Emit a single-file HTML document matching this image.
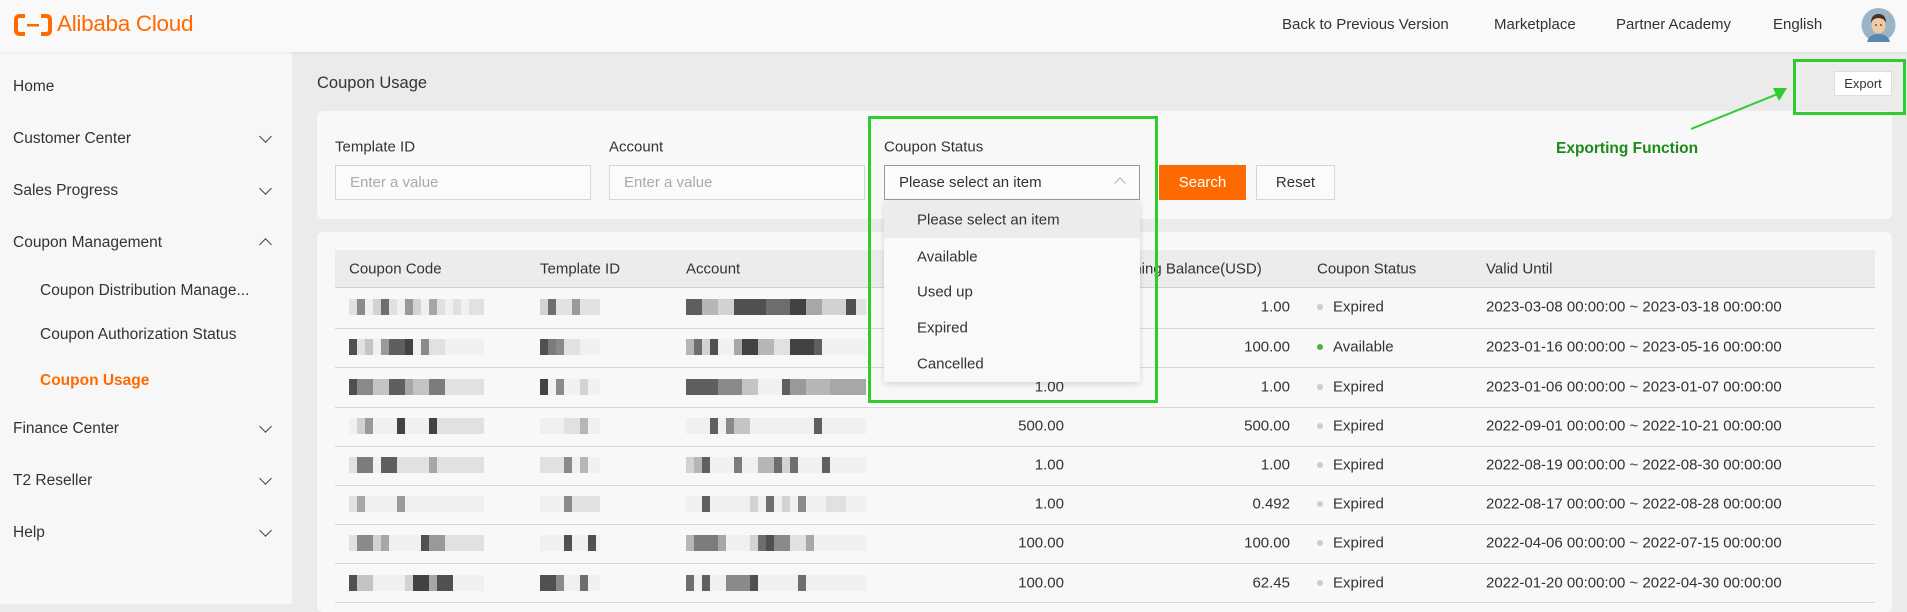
<!DOCTYPE html>
<html><head><meta charset="utf-8"><style>
*{margin:0;padding:0;box-sizing:border-box}
body{width:1907px;height:604px;overflow:hidden;background:#ebebeb;font-family:"Liberation Sans",Arial,sans-serif;color:#333;position:relative}
.a{position:absolute;white-space:nowrap}
#hdr{left:0;top:0;width:1907px;height:52px;background:#f9f9f9;box-shadow:0 1px 3px rgba(0,0,0,.06);z-index:2}
#side{left:0;top:52px;width:292px;height:552px;background:#f7f7f7}
.nav{font-size:15px;color:#333;top:0}
.sm{font-size:15.5px;color:#333;transform:translateY(-50%)}
.chev{width:9px;height:9px;border-right:1.4px solid #444;border-bottom:1.4px solid #444;transform:rotate(45deg)}
.card{background:#f8f8f8;border-radius:6px}
.lbl{font-size:15px;color:#333;transform:translateY(-50%)}
.inp{background:#fbfbfb;border:1px solid #d6d6d6;height:35px;font-size:15px;color:#aaa;padding:0 14px;line-height:33px}
.th{font-size:15px;color:#333;transform:translateY(-50%)}
.td{font-size:15px;color:#333;transform:translateY(-50%)}
.r{text-align:right}
.ln{height:1px;background:#d8d8d8;left:335px;width:1540px}
.dot{width:6px;height:6px;border-radius:50%;background:#ccc}
.px{height:16px;transform:translateY(-50%);opacity:.85}
.dd{font-size:15px;color:#333;transform:translateY(-50%)}
</style></head><body>
<div id="hdr" class="a">
 <svg class="a" style="left:14px;top:14px" width="38" height="22" viewBox="0 0 38 22"><path d="M11 2H6Q2 2 2 6V16Q2 20 6 20H11" fill="none" stroke="#ff6a00" stroke-width="4"/><path d="M27 2H32Q36 2 36 6V16Q36 20 32 20H27" fill="none" stroke="#ff6a00" stroke-width="4"/><rect x="13" y="10" width="12" height="2.5" fill="#ff6a00"/></svg>
 <div class="a" style="left:57px;top:11px;font-size:22.5px;color:#ff6a00;letter-spacing:-0.3px">Alibaba Cloud</div>
 <div class="a nav" style="left:1282px;top:16px">Back to Previous Version</div>
 <div class="a nav" style="left:1494px;top:16px">Marketplace</div>
 <div class="a nav" style="left:1616px;top:16px">Partner Academy</div>
 <div class="a nav" style="left:1773px;top:16px">English</div>
 <svg class="a" style="left:1861px;top:7px" width="35" height="36" viewBox="0 0 35 36"><circle cx="17.5" cy="18" r="17" fill="#9bb5c6"/><path d="M6 35Q8 27 17.5 27Q27 27 29 35Z" fill="#5a87b0"/><ellipse cx="17.5" cy="18" rx="7" ry="8.5" fill="#f2c9a5"/><path d="M10 16Q10 7 17.5 7Q25 7 25 16Q23 11 17.5 11Q12 11 10 16Z" fill="#4a3328"/><circle cx="15" cy="18" r=".9" fill="#333"/><circle cx="20" cy="18" r=".9" fill="#333"/></svg>
</div>
<div id="side" class="a">
 <div class="a sm" style="left:13px;top:35px">Home</div>
 <div class="a sm" style="left:13px;top:87px">Customer Center</div><div class="a chev" style="left:261px;top:80px"></div>
 <div class="a sm" style="left:13px;top:139px">Sales Progress</div><div class="a chev" style="left:261px;top:132px"></div>
 <div class="a sm" style="left:13px;top:191px">Coupon Management</div><div class="a chev" style="left:261px;top:188px;transform:rotate(225deg)"></div>
 <div class="a sm" style="left:40px;top:239px">Coupon Distribution Manage...</div>
 <div class="a sm" style="left:40px;top:283px">Coupon Authorization Status</div>
 <div class="a sm" style="left:40px;top:329px;color:#ff6a00;font-weight:bold">Coupon Usage</div>
 <div class="a sm" style="left:13px;top:377px">Finance Center</div><div class="a chev" style="left:261px;top:370px"></div>
 <div class="a sm" style="left:13px;top:429px">T2 Reseller</div><div class="a chev" style="left:261px;top:422px"></div>
 <div class="a sm" style="left:13px;top:481px">Help</div><div class="a chev" style="left:261px;top:474px"></div>
</div>
<div class="a" style="left:317px;top:74px;font-size:16.5px;color:#333">Coupon Usage</div>

<div class="a card" style="left:317px;top:111px;width:1575px;height:108px"></div>
<div class="a lbl" style="left:335px;top:147px">Template ID</div>
<div class="a lbl" style="left:609px;top:147px">Account</div>
<div class="a lbl" style="left:884px;top:147px">Coupon Status</div>
<div class="a inp" style="left:335px;top:165px;width:256px">Enter a value</div>
<div class="a inp" style="left:609px;top:165px;width:256px">Enter a value</div>
<div class="a inp" style="left:884px;top:165px;width:256px;color:#333;border-color:#999">Please select an item</div>
<div class="a chev" style="left:1116px;top:179px;width:8px;height:8px;border-color:#aaa;transform:rotate(225deg)"></div>
<div class="a" style="left:1159px;top:165px;width:87px;height:35px;background:#ff6a00;color:#fff;font-size:15px;text-align:center;line-height:35px">Search</div>
<div class="a" style="left:1256px;top:165px;width:79px;height:35px;background:#fbfbfb;border:1px solid #d6d6d6;font-size:15px;text-align:center;line-height:33px">Reset</div>

<div class="a" style="left:1834px;top:71px;width:58px;height:25px;background:#fff;border:1px solid #ddd;font-size:13px;line-height:23px;text-align:center;color:#333;z-index:5">Export</div>
<div class="a" style="left:1793px;top:59px;width:113px;height:56px;border:3.5px solid #2ecc2e;z-index:5"></div>
<svg class="a" style="left:1685px;top:82px;z-index:5" width="110" height="52"><line x1="6" y1="47" x2="95" y2="11" stroke="#2ecc2e" stroke-width="2"/><polygon points="102,6 88,6 94,19" fill="#2ecc2e"/></svg>
<div class="a" style="left:1556px;top:140px;font-size:15.5px;font-weight:bold;color:#1a8a1a;z-index:5">Exporting Function</div>

<div class="a card" style="left:317px;top:232px;width:1575px;height:380px"></div>
<div class="a" style="left:335px;top:250px;width:1540px;height:38px;background:#ececec;border-bottom:1px solid #d0d0d0"></div>
<div class="a th" style="left:349px;top:269px">Coupon Code</div>
<div class="a th" style="left:540px;top:269px">Template ID</div>
<div class="a th" style="left:686px;top:269px">Account</div>
<div class="a th" style="left:1090px;top:269px">Remaining Balance(USD)</div>
<div class="a th" style="left:1317px;top:269px">Coupon Status</div>
<div class="a th" style="left:1486px;top:269px">Valid Until</div>

<div class="a ln" style="top:328px"></div><div class="a ln" style="top:367px"></div><div class="a ln" style="top:407px"></div><div class="a ln" style="top:446px"></div><div class="a ln" style="top:485px"></div><div class="a ln" style="top:524px"></div><div class="a ln" style="top:563px"></div><div class="a ln" style="top:602px"></div>

<div class="a px" style="left:349px;top:307px;width:135px;background:linear-gradient(90deg,#ddd 0 8px,#777 8px 16px,#eee 16px 24px,#ccc 24px 32px,#555 32px 40px,#ddd 40px 48px,#eee 48px 56px,#888 56px 64px,#ccc 64px 72px,#eee 72px 80px,#999 80px 88px,#ddd 88px 96px,#eee 96px 104px,#ddd 104px 112px,#eee 112px 120px,#ddd 120px 135px)"></div>
<div class="a px" style="left:540px;top:307px;width:60px;background:linear-gradient(90deg,#ccc 0 8px,#555 8px 16px,#ddd 16px 32px,#888 32px 40px,#ddd 40px 60px)"></div>
<div class="a px" style="left:686px;top:307px;width:180px;background:linear-gradient(90deg,#444 0 16px,#aaa 16px 32px,#ccc 32px 48px,#333 48px 80px,#555 80px 104px,#222 104px 120px,#999 120px 136px,#ccc 136px 160px,#333 160px 170px,#ddd 170px 180px)"></div>
<div class="a px" style="left:349px;top:347px;width:135px;background:linear-gradient(90deg,#333 0 8px,#ddd 8px 16px,#bbb 16px 24px,#eee 24px 32px,#888 32px 40px,#444 40px 56px,#222 56px 64px,#eee 64px 72px,#777 72px 80px,#ddd 80px 96px,#eee 96px 135px)"></div>
<div class="a px" style="left:540px;top:347px;width:60px;background:linear-gradient(90deg,#333 0 8px,#666 8px 16px,#777 16px 24px,#ddd 24px 40px,#eee 40px 60px)"></div>
<div class="a px" style="left:686px;top:347px;width:180px;background:linear-gradient(90deg,#aaa 0 8px,#555 8px 16px,#ccc 16px 24px,#333 24px 32px,#eee 32px 48px,#999 48px 56px,#222 56px 72px,#aaa 72px 88px,#ddd 88px 104px,#222 104px 128px,#444 128px 136px,#eee 136px 180px)"></div>
<div class="a px" style="left:349px;top:387px;width:135px;background:linear-gradient(90deg,#333 0 8px,#777 8px 24px,#bbb 24px 40px,#444 40px 56px,#999 56px 64px,#bbb 64px 80px,#666 80px 96px,#ddd 96px 135px)"></div>
<div class="a px" style="left:540px;top:387px;width:60px;background:linear-gradient(90deg,#222 0 8px,#eee 8px 16px,#777 16px 24px,#eee 24px 40px,#ccc 40px 48px,#eee 48px 60px)"></div>
<div class="a px" style="left:686px;top:387px;width:180px;background:linear-gradient(90deg,#444 0 32px,#777 32px 56px,#bbb 56px 72px,#eee 72px 96px,#444 96px 104px,#888 104px 120px,#aaa 120px 144px,#999 144px 180px)"></div>
<div class="a px" style="left:349px;top:426px;width:135px;background:linear-gradient(90deg,#eee 0 8px,#ccc 8px 16px,#888 16px 24px,#eee 24px 48px,#222 48px 56px,#eee 56px 80px,#222 80px 88px,#ddd 88px 135px)"></div>
<div class="a px" style="left:540px;top:426px;width:60px;background:linear-gradient(90deg,#eee 0 24px,#ddd 24px 40px,#aaa 40px 48px,#eee 48px 60px)"></div>
<div class="a px" style="left:686px;top:426px;width:180px;background:linear-gradient(90deg,#eee 0 24px,#444 24px 32px,#eee 32px 40px,#777 40px 48px,#bbb 48px 64px,#eee 64px 128px,#444 128px 136px,#eee 136px 180px)"></div>
<div class="a px" style="left:349px;top:465px;width:135px;background:linear-gradient(90deg,#ddd 0 8px,#666 8px 24px,#eee 24px 32px,#444 32px 48px,#ddd 48px 80px,#999 80px 88px,#ddd 88px 135px)"></div>
<div class="a px" style="left:540px;top:465px;width:60px;background:linear-gradient(90deg,#ddd 0 24px,#777 24px 32px,#eee 32px 40px,#aaa 40px 48px,#eee 48px 60px)"></div>
<div class="a px" style="left:686px;top:465px;width:180px;background:linear-gradient(90deg,#ccc 0 8px,#aaa 8px 16px,#444 16px 24px,#eee 24px 48px,#666 48px 56px,#eee 56px 72px,#aaa 72px 88px,#555 88px 96px,#ccc 96px 104px,#555 104px 112px,#eee 112px 136px,#444 136px 144px,#eee 144px 180px)"></div>
<div class="a px" style="left:349px;top:504px;width:135px;background:linear-gradient(90deg,#ddd 0 8px,#999 8px 16px,#eee 16px 48px,#888 48px 56px,#eee 56px 135px)"></div>
<div class="a px" style="left:540px;top:504px;width:60px;background:linear-gradient(90deg,#eee 0 24px,#777 24px 32px,#ddd 32px 60px)"></div>
<div class="a px" style="left:686px;top:504px;width:180px;background:linear-gradient(90deg,#eee 0 16px,#444 16px 24px,#eee 24px 64px,#ccc 64px 72px,#eee 72px 80px,#555 80px 88px,#eee 88px 96px,#ccc 96px 104px,#eee 104px 112px,#777 112px 120px,#eee 120px 140px,#ddd 140px 160px,#eee 160px 180px)"></div>
<div class="a px" style="left:349px;top:543px;width:135px;background:linear-gradient(90deg,#ddd 0 8px,#777 8px 24px,#ccc 24px 32px,#999 32px 40px,#eee 40px 72px,#333 72px 80px,#888 80px 96px,#ddd 96px 135px)"></div>
<div class="a px" style="left:540px;top:543px;width:60px;background:linear-gradient(90deg,#eee 0 24px,#333 24px 32px,#eee 32px 48px,#333 48px 56px,#eee 56px 60px)"></div>
<div class="a px" style="left:686px;top:543px;width:180px;background:linear-gradient(90deg,#aaa 0 8px,#666 8px 32px,#999 32px 40px,#eee 40px 64px,#ccc 64px 72px,#555 72px 80px,#333 80px 88px,#777 88px 104px,#ddd 104px 120px,#999 120px 128px,#eee 128px 180px)"></div>
<div class="a px" style="left:349px;top:583px;width:135px;background:linear-gradient(90deg,#333 0 8px,#bbb 8px 24px,#eee 24px 56px,#ccc 56px 64px,#222 64px 80px,#999 80px 88px,#333 88px 104px,#eee 104px 135px)"></div>
<div class="a px" style="left:540px;top:583px;width:60px;background:linear-gradient(90deg,#333 0 16px,#777 16px 24px,#eee 24px 40px,#555 40px 48px,#eee 48px 60px)"></div>
<div class="a px" style="left:686px;top:583px;width:180px;background:linear-gradient(90deg,#555 0 8px,#eee 8px 16px,#444 16px 24px,#eee 24px 40px,#777 40px 64px,#333 64px 72px,#eee 72px 112px,#555 112px 120px,#eee 120px 180px)"></div>

<div class="a td r" style="left:964px;width:100px;top:387px">1.00</div>
<div class="a td r" style="left:964px;width:100px;top:426px">500.00</div>
<div class="a td r" style="left:964px;width:100px;top:465px">1.00</div>
<div class="a td r" style="left:964px;width:100px;top:504px">1.00</div>
<div class="a td r" style="left:964px;width:100px;top:543px">100.00</div>
<div class="a td r" style="left:964px;width:100px;top:583px">100.00</div>

<div class="a td r" style="left:1190px;width:100px;top:307px">1.00</div>
<div class="a td r" style="left:1190px;width:100px;top:347px">100.00</div>
<div class="a td r" style="left:1190px;width:100px;top:387px">1.00</div>
<div class="a td r" style="left:1190px;width:100px;top:426px">500.00</div>
<div class="a td r" style="left:1190px;width:100px;top:465px">1.00</div>
<div class="a td r" style="left:1190px;width:100px;top:504px">0.492</div>
<div class="a td r" style="left:1190px;width:100px;top:543px">100.00</div>
<div class="a td r" style="left:1190px;width:100px;top:583px">62.45</div>

<div class="a dot" style="left:1317px;top:304px"></div><div class="a td" style="left:1333px;top:307px">Expired</div>
<div class="a dot" style="left:1317px;top:344px;background:#52b043"></div><div class="a td" style="left:1333px;top:347px">Available</div>
<div class="a dot" style="left:1317px;top:384px"></div><div class="a td" style="left:1333px;top:387px">Expired</div>
<div class="a dot" style="left:1317px;top:423px"></div><div class="a td" style="left:1333px;top:426px">Expired</div>
<div class="a dot" style="left:1317px;top:462px"></div><div class="a td" style="left:1333px;top:465px">Expired</div>
<div class="a dot" style="left:1317px;top:501px"></div><div class="a td" style="left:1333px;top:504px">Expired</div>
<div class="a dot" style="left:1317px;top:540px"></div><div class="a td" style="left:1333px;top:543px">Expired</div>
<div class="a dot" style="left:1317px;top:580px"></div><div class="a td" style="left:1333px;top:583px">Expired</div>

<div class="a td" style="left:1486px;top:307px">2023-03-08 00:00:00 ~ 2023-03-18 00:00:00</div>
<div class="a td" style="left:1486px;top:347px">2023-01-16 00:00:00 ~ 2023-05-16 00:00:00</div>
<div class="a td" style="left:1486px;top:387px">2023-01-06 00:00:00 ~ 2023-01-07 00:00:00</div>
<div class="a td" style="left:1486px;top:426px">2022-09-01 00:00:00 ~ 2022-10-21 00:00:00</div>
<div class="a td" style="left:1486px;top:465px">2022-08-19 00:00:00 ~ 2022-08-30 00:00:00</div>
<div class="a td" style="left:1486px;top:504px">2022-08-17 00:00:00 ~ 2022-08-28 00:00:00</div>
<div class="a td" style="left:1486px;top:543px">2022-04-06 00:00:00 ~ 2022-07-15 00:00:00</div>
<div class="a td" style="left:1486px;top:583px">2022-01-20 00:00:00 ~ 2022-04-30 00:00:00</div>

<div class="a" style="left:884px;top:201px;width:256px;height:181px;background:#f9f9f9;box-shadow:0 2px 6px rgba(0,0,0,.15);z-index:3">
 <div class="a" style="left:0;top:0;width:256px;height:37px;background:#ececec"></div>
 <div class="a dd" style="left:33px;top:19px">Please select an item</div>
 <div class="a dd" style="left:33px;top:56px">Available</div>
 <div class="a dd" style="left:33px;top:91px">Used up</div>
 <div class="a dd" style="left:33px;top:127px">Expired</div>
 <div class="a dd" style="left:33px;top:163px">Cancelled</div>
</div>
<div class="a" style="left:868px;top:116px;width:290px;height:287px;border:3.5px solid #2ecc2e;z-index:4"></div>
</body></html>
